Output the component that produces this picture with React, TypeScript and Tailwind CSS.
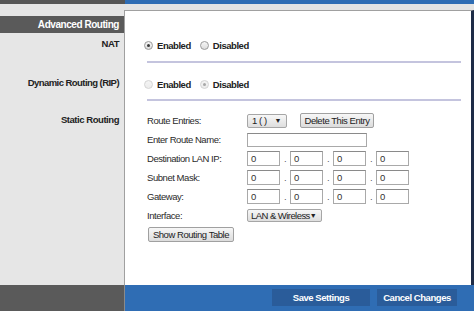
import React from "react";

function Radio({ checked, disabled }: { checked?: boolean; disabled?: boolean }) {
  return (
    <span
      className={
        "relative inline-block w-[9px] h-[9px] rounded-full border shrink-0 " +
        (disabled
          ? "border-[#d4d4d4] bg-gradient-to-b from-[#f4f4f4] to-[#ececec]"
          : "border-[#9a9a9a] bg-gradient-to-b from-[#f6f6f6] to-[#dcdcdc]")
      }
    >
      {checked && (
        <span
          className={
            "absolute left-[2px] top-[2px] w-[3px] h-[3px] rounded-full " +
            (disabled ? "bg-[#a8a8a8]" : "bg-[#3a3a3a]")
          }
        />
      )}
    </span>
  );
}

function IpInput() {
  return (
    <div className="w-[33px] h-[15px] bg-white border border-[#a9a9a9] border-t-[#8a8a8a] flex items-center pl-[3px] text-[#333]">
      0
    </div>
  );
}

function Dot() {
  return <div className="w-[10px] h-[15px] flex items-end justify-center pb-[2px] text-[#555]">.</div>;
}

function IpRow({ label }: { label: string }) {
  return (
    <div className="mt-[4px] h-[15px] flex items-center">
      <div className="w-[100px] text-[#2a2a2a]">{label}</div>
      <IpInput />
      <Dot />
      <IpInput />
      <Dot />
      <IpInput />
      <Dot />
      <IpInput />
    </div>
  );
}

export default function App() {
  return (
    <div className="w-[474px] h-[311px] flex flex-col overflow-hidden whitespace-nowrap font-['Liberation_Sans',Arial,sans-serif] text-[9.5px] tracking-[-0.45px] leading-[11px]">
      {/* top strip */}
      <div className="h-[4px] flex shrink-0">
        <div className="w-[125px] bg-[#555555]" />
        <div className="flex-1 bg-[#2f6db4]" />
      </div>
      <div className="h-[6px] bg-[#e4e4e4] shrink-0" />

      {/* body */}
      <div className="flex-1 flex min-h-0">
        {/* left column */}
        <div className="w-[124px] bg-[#e6e6e6] flex flex-col shrink-0">
          <div className="mt-[6px] h-[17px] bg-[#5a5a5a] flex items-center justify-end pr-[5px] text-white font-bold text-[10px]">
            Advanced Routing
          </div>
          <div className="mt-[5px] h-[11px] text-right pr-[5px] font-bold text-[#222]">NAT</div>
          <div className="mt-[28px] h-[11px] text-right pr-[5px] font-bold text-[#222] tracking-[-0.55px]">Dynamic Routing (RIP)</div>
          <div className="mt-[26px] h-[11px] text-right pr-[5px] font-bold text-[#222]">Static Routing</div>
        </div>

        {/* right panel */}
        <div className="flex-1 flex flex-col bg-white border-l border-t border-[#a0a0a0] border-r-[3px] border-r-[#1e2c47]">
          <div className="mt-[29px] h-[11px] flex items-center pl-[19px]">
            <Radio checked />
            <span className="ml-[4px] mr-[9px] font-bold text-[#222]">Enabled</span>
            <Radio />
            <span className="ml-[4px] font-bold text-[#222]">Disabled</span>
          </div>
          <div className="mt-[10px] h-[2px] ml-[22px] mr-[10px] bg-[#c4c4de]" />
          <div className="mt-[16px] h-[11px] flex items-center pl-[19px]">
            <Radio disabled />
            <span className="ml-[4px] mr-[9px] font-bold text-[#222]">Enabled</span>
            <Radio checked disabled />
            <span className="ml-[4px] font-bold text-[#222]">Disabled</span>
          </div>
          <div className="mt-[9px] h-[2px] ml-[22px] mr-[10px] bg-[#c4c4de]" />

          <div className="pl-[22px] flex flex-col">
            <div className="mt-[12px] h-[15px] flex items-center">
              <div className="w-[100px] text-[#2a2a2a]">Route Entries:</div>
              <div className="w-[40px] h-[14px] rounded-[2px] border border-[#a6a6a6] bg-gradient-to-b from-[#f7f7f7] to-[#dedede] flex items-center justify-between pl-[4px] pr-[5px] text-[#222]">
                <span>1 ( )</span>
                <span className="text-[7px]">▼</span>
              </div>
              <div className="ml-[13px] w-[74px] h-[15px] rounded-[2px] border border-[#a0a0a0] bg-gradient-to-b from-[#f7f7f7] to-[#dcdcdc] flex items-center justify-center text-[#222]">
                Delete This Entry
              </div>
            </div>
            <div className="mt-[4px] h-[15px] flex items-center">
              <div className="w-[100px] text-[#2a2a2a]">Enter Route Name:</div>
              <div className="w-[120px] h-[14px] bg-white border border-[#a9a9a9] border-t-[#8a8a8a]" />
            </div>
            <IpRow label="Destination LAN IP:" />
            <IpRow label="Subnet Mask:" />
            <IpRow label="Gateway:" />
            <div className="mt-[4px] h-[15px] flex items-center">
              <div className="w-[100px] text-[#2a2a2a]">Interface:</div>
              <div className="w-[75px] h-[13px] rounded-[2px] border border-[#a6a6a6] bg-gradient-to-b from-[#f7f7f7] to-[#dedede] flex items-center justify-between pl-[3px] pr-[5px] overflow-hidden text-[#222]">
                <span className="tracking-[-0.55px]">LAN &amp; Wireless</span>
                <span className="text-[7px]">▼</span>
              </div>
            </div>
            <div className="mt-[4px] ml-[1px] w-[86px] h-[15px] rounded-[2px] border border-[#a0a0a0] bg-gradient-to-b from-[#f7f7f7] to-[#dcdcdc] flex items-center justify-center text-[#222]">
              Show Routing Table
            </div>
          </div>
        </div>
      </div>

      {/* bottom bar */}
      <div className="h-[26px] flex shrink-0">
        <div className="w-[124px] bg-[#5a5a5a]" />
        <div className="w-[1px] bg-[#8a8a8a]" />
        <div className="flex-1 bg-[#2f6db4] flex items-start justify-end pt-[4px] pr-[17px] gap-[7px]">
          <div className="w-[98px] h-[17px] bg-[#2a5c9a] flex items-center justify-center text-white font-bold">
            Save Settings
          </div>
          <div className="w-[80px] h-[17px] bg-[#2a5c9a] flex items-center justify-center text-white font-bold">
            Cancel Changes
          </div>
        </div>
      </div>
    </div>
  );
}
